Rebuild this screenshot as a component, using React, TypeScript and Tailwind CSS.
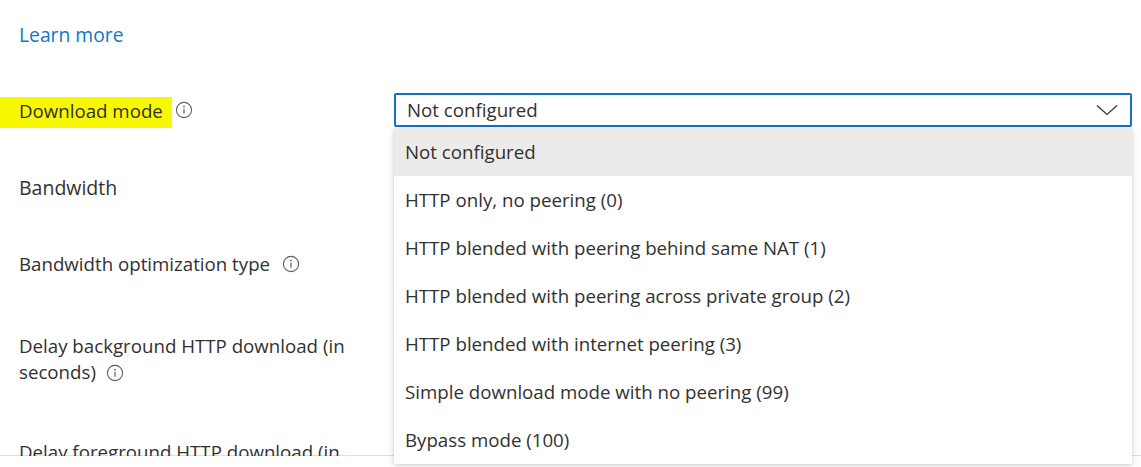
import React, { useState } from "react";

const options = [
  "Not configured",
  "HTTP only, no peering (0)",
  "HTTP blended with peering behind same NAT (1)",
  "HTTP blended with peering across private group (2)",
  "HTTP blended with internet peering (3)",
  "Simple download mode with no peering (99)",
  "Bypass mode (100)",
];

function InfoIcon() {
  return (
    <svg width="18" height="18" viewBox="0 0 18 18" fill="none" className="shrink-0">
      <circle cx="9" cy="9" r="7.6" stroke="#605e5c" strokeWidth="1.1" />
      <circle cx="9" cy="5.6" r="0.9" fill="#605e5c" />
      <path d="M9 7.8v5" stroke="#605e5c" strokeWidth="1.2" />
    </svg>
  );
}

export default function App() {
  const [selected] = useState(0);

  return (
    <div
      className="w-[1141px] h-[467px] bg-white overflow-hidden text-[#323130]"
      style={{ fontFamily: '"Open Sans", "Noto Sans", sans-serif' }}
    >
      <div className="h-[456px] border-b border-[#e1dfdd]">
        <div className="pl-[19px] pr-[9px] pt-[22px] text-[18.7px] leading-[26px]">
          <a className="text-[#0f78cc] block h-[26px] text-[19.3px]">Learn more</a>

          {/* Download mode row */}
          <div className="flex items-center mt-[45px] h-[34px]">
            <div className="w-[375px] flex items-center">
              <span className="inline-flex items-center h-[31px] mt-[4px] pb-[2px] bg-[#f8f800] -ml-[19px] pl-[19px] pr-[9px]">
                Download mode
              </span>
              <span className="ml-[3px]">
                <InfoIcon />
              </span>
            </div>
            <div className="relative flex-1">
              <div className="h-[34px] border-2 border-[#0f72c4] rounded-[2px] flex items-center justify-between pl-[11px] pr-[12px] bg-white">
                <span>{options[selected]}</span>
                <svg width="22" height="12" viewBox="0 0 22 12" fill="none">
                  <path d="M1 1.5l10 9 10-9" stroke="#323130" strokeWidth="1.2" />
                </svg>
              </div>
              <div className="absolute left-0 right-0 top-[35px] bg-white shadow-[0_3px_8px_rgba(0,0,0,0.14),0_0_2px_rgba(0,0,0,0.12)] z-10">
                {options.map((o, i) => (
                  <div
                    key={o}
                    className={`h-[48px] flex items-center pl-[11px] ${
                      i === selected ? "bg-[#edebe9]" : ""
                    }`}
                  >
                    {o}
                  </div>
                ))}
              </div>
            </div>
          </div>

          <div className="mt-[48px] text-[19.5px]">Bandwidth</div>

          <div className="mt-[50px] flex items-center">
            <span>Bandwidth optimization type</span>
            <span className="ml-[12px]">
              <InfoIcon />
            </span>
          </div>

          <div className="mt-[56px] w-[365px]">
            Delay background HTTP download (in seconds)
            <span className="inline-block align-middle ml-[10px] -mt-[3px]">
              <InfoIcon />
            </span>
          </div>

          <div className="mt-[54px] w-[365px] h-[17px] overflow-hidden">
            Delay foreground HTTP download (in seconds)
          </div>
        </div>
      </div>
    </div>
  );
}
